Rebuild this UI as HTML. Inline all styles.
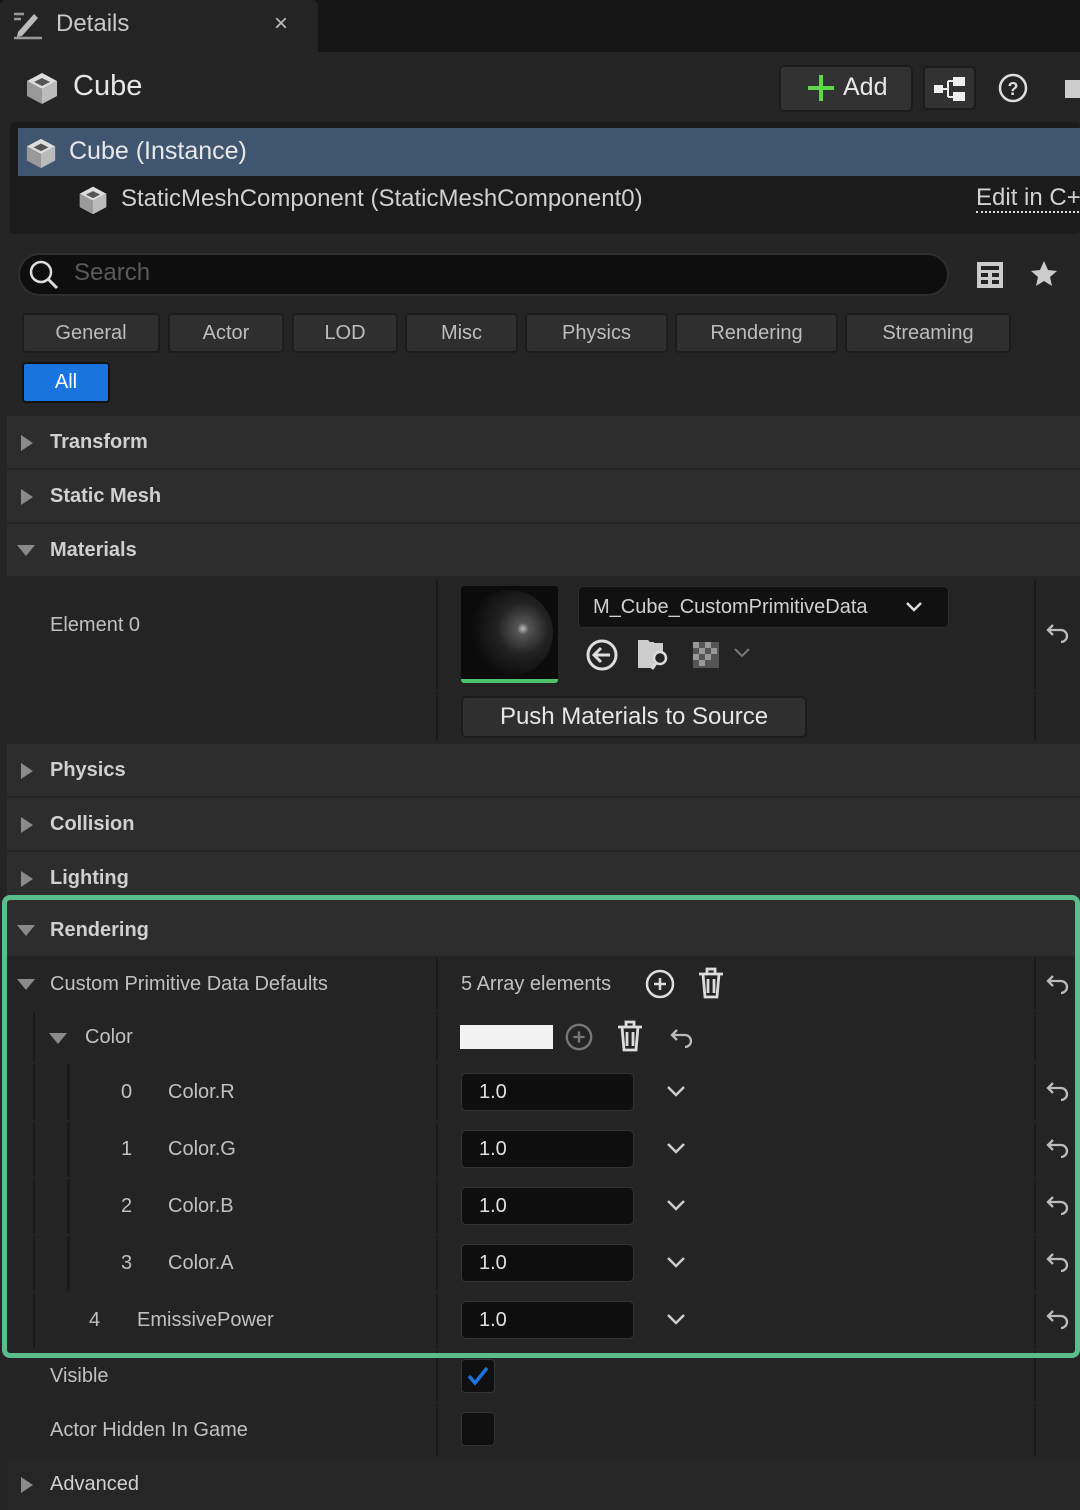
<!DOCTYPE html>
<html><head><meta charset="utf-8"><style>
*{margin:0;padding:0;box-sizing:border-box}
body{width:1080px;height:1510px;background:#151515;font-family:"Liberation Sans",sans-serif;color:#c8c8c8;position:relative;overflow:hidden}
.a{position:absolute}
.cat{position:absolute;left:7px;right:0;height:52px;background:#2d2d2d;font-weight:bold;font-size:20px;color:#d0d0d0;line-height:52px;padding-left:43px}
.row{position:absolute;left:7px;right:0;background:#242424;font-size:20px;color:#c0c0c0}
.tri{position:absolute;left:14px;top:19px;width:0;height:0;border-top:8px solid transparent;border-bottom:8px solid transparent;border-left:12px solid #8a8a8a}
.trd{position:absolute;left:10px;top:21px;width:0;height:0;border-left:9px solid transparent;border-right:9px solid transparent;border-top:11px solid #8a8a8a}
.btn{position:absolute;top:313px;height:40px;background:#2f2f2f;border:2px solid #1c1c1c;border-radius:4px;font-size:20px;color:#bdbdbd;text-align:center;line-height:36px}
.vsep{position:absolute;top:0;bottom:0;width:2px;background:#1a1a1a}
.num{position:absolute;left:461px;width:173px;height:38px;background:#0e0e0e;border-radius:5px;border:1px solid #333;color:#e0e0e0;font-size:20px;line-height:36px;padding-left:17px}
.chev{position:absolute;left:666px}
.rst{position:absolute;left:1045px}
</style></head><body>
<div class="a" style="left:0;top:0;width:318px;height:54px;background:#242424;border-radius:6px 6px 0 0"></div>
<svg class="a" style="left:12px;top:10px" width="34" height="30" viewBox="0 0 34 30"><path d="M6 22 L22 4 L26 8 L10 26 L5 27Z" fill="#bbb"/><path d="M2 4h10M2 9h7M2 28h28" stroke="#999" stroke-width="2.5"/></svg>
<div class="a" style="left:56px;top:10px;font-size:24px;color:#c8c8c8">Details</div>
<div class="a" style="left:274px;top:10px;font-size:24px;color:#bbb">×</div>
<div class="a" style="left:0;top:52px;width:1080px;height:1458px;background:#242424"></div>
<svg class="a" style="left:24px;top:70px" width="36" height="36" viewBox="0 0 36 36"><path d="M18 3L33 11L18 19L3 11Z" fill="#ddd"/><path d="M3 11L18 19V34L3 26Z" fill="#999"/><path d="M33 11L18 19V34L33 26Z" fill="#bbb"/><path d="M18 8L26 12L18 16L10 12Z" fill="#555"/></svg>
<div class="a" style="left:73px;top:70px;font-size:29px;color:#e6e6e6">Cube</div>
<div class="a" style="left:779px;top:65px;width:134px;height:47px;background:#323232;border:2px solid #1c1c1c;border-radius:5px"></div>
<div class="a" style="left:808px;top:86px;width:26px;height:4px;background:#5fd54a"></div>
<div class="a" style="left:819px;top:75px;width:4px;height:26px;background:#5fd54a"></div>
<div class="a" style="left:843px;top:73px;font-size:25px;color:#e8e8e8">Add</div>
<div class="a" style="left:923px;top:66px;width:53px;height:44px;background:#323232;border:2px solid #1c1c1c;border-radius:5px"></div>
<svg class="a" style="left:932px;top:75px" width="36" height="28" viewBox="0 0 36 28"><rect x="2" y="10" width="9" height="8" fill="#eee"/><rect x="21" y="2" width="12" height="9" fill="#eee"/><rect x="21" y="17" width="12" height="9" fill="#eee"/><path d="M11 14h5M16 6v16M16 6h5M16 22h5" stroke="#eee" stroke-width="2" fill="none"/></svg>
<svg class="a" style="left:997px;top:72px" width="32" height="32" viewBox="0 0 32 32"><circle cx="16" cy="16" r="13" stroke="#ddd" stroke-width="2.5" fill="none"/><text x="16" y="23" text-anchor="middle" font-size="18" font-weight="bold" fill="#ddd" font-family="Liberation Sans">?</text></svg>
<div class="a" style="left:1065px;top:80px;width:15px;height:18px;background:#ccc"></div>
<div class="a" style="left:10px;top:122px;width:1070px;height:112px;background:#1b1b1b;border-radius:4px"></div>
<div class="a" style="left:18px;top:128px;width:1062px;height:48px;background:#405670"></div>
<svg class="a" style="left:24px;top:136px" width="34" height="34" viewBox="0 0 36 36"><path d="M18 3L33 11L18 19L3 11Z" fill="#ddd"/><path d="M3 11L18 19V34L3 26Z" fill="#999"/><path d="M33 11L18 19V34L33 26Z" fill="#bbb"/><path d="M18 8L26 12L18 16L10 12Z" fill="#555"/></svg>
<div class="a" style="left:69px;top:137px;font-size:25px;color:#e8e8e8">Cube (Instance)</div>
<svg class="a" style="left:77px;top:184px" width="32" height="32" viewBox="0 0 36 36"><path d="M18 3L33 11L18 19L3 11Z" fill="#ddd"/><path d="M3 11L18 19V34L3 26Z" fill="#999"/><path d="M33 11L18 19V34L33 26Z" fill="#bbb"/><path d="M18 8L26 12L18 16L10 12Z" fill="#555"/></svg>
<div class="a" style="left:121px;top:185px;font-size:24px;color:#d0d0d0">StaticMeshComponent (StaticMeshComponent0)</div>
<div class="a" style="left:976px;top:185px;font-size:24px;color:#d0d0d0;white-space:nowrap;border-bottom:2px dotted #ddd;line-height:26px">Edit in C++</div>
<div class="a" style="left:18px;top:253px;width:931px;height:43px;background:#0e0e0e;border:2px solid #2e2e2e;border-radius:22px"></div>
<svg class="a" style="left:27px;top:258px" width="34" height="34" viewBox="0 0 34 34"><circle cx="14" cy="14" r="10" stroke="#ddd" stroke-width="2.5" fill="none"/><path d="M21 21L30 30" stroke="#ddd" stroke-width="3"/></svg>
<div class="a" style="left:74px;top:259px;font-size:24px;color:#5a5a5a">Search</div>
<svg class="a" style="left:974px;top:259px" width="32" height="32" viewBox="0 0 32 32"><rect x="3" y="3" width="26" height="26" fill="#ccc"/><rect x="7" y="7" width="18" height="4" fill="#242424"/><rect x="7" y="14" width="7" height="4" fill="#242424"/><rect x="18" y="14" width="7" height="4" fill="#242424"/><rect x="7" y="21" width="7" height="4" fill="#242424"/><rect x="18" y="21" width="7" height="4" fill="#242424"/></svg>
<svg class="a" style="left:1029px;top:259px" width="30" height="30" viewBox="0 0 30 30"><path d="M15 2L19 11L28 12L21 18L23 27L15 22L7 27L9 18L2 12L11 11Z" fill="#ccc"/></svg>
<div class="btn" style="left:22px;width:138px">General</div>
<div class="btn" style="left:168px;width:116px">Actor</div>
<div class="btn" style="left:292px;width:106px">LOD</div>
<div class="btn" style="left:405px;width:113px">Misc</div>
<div class="btn" style="left:525px;width:143px">Physics</div>
<div class="btn" style="left:675px;width:163px">Rendering</div>
<div class="btn" style="left:845px;width:166px">Streaming</div>
<div class="a" style="left:22px;top:362px;width:88px;height:41px;background:#1a74e0;border:2px solid #111;border-radius:4px;font-size:20px;color:#fff;text-align:center;line-height:37px">All</div>
<div class="cat" style="top:416px"><div class="tri"></div>Transform</div>
<div class="cat" style="top:470px"><div class="tri"></div>Static Mesh</div>
<div class="cat" style="top:524px"><div class="trd"></div>Materials</div>
<div class="row" style="top:578px;height:112px"><div class="vsep" style="left:429px"></div><div class="vsep" style="left:1027px"></div>
<div class="a" style="left:43px;top:36px">Element 0</div></div>
<div class="a" style="left:461px;top:586px;width:97px;height:97px;background:#0b0b0b;border-radius:3px;overflow:hidden"><div class="a" style="left:6px;top:4px;width:86px;height:86px;border-radius:50%;background:radial-gradient(circle at 65% 45%,#bbb 0,#555 8%,#222 35%,#0b0b0b 70%)"></div><div class="a" style="left:0;bottom:0;width:97px;height:4px;background:#4ac46a"></div></div>
<div class="a" style="left:578px;top:586px;width:371px;height:42px;background:#111;border:1px solid #2c2c2c;border-radius:5px;font-size:20px;color:#d0d0d0;line-height:40px;padding-left:14px">M_Cube_CustomPrimitiveData<svg style="position:absolute;left:326px;top:13px" width="18" height="14" viewBox="0 0 18 14"><path d="M2 3L9 10L16 3" stroke="#ddd" stroke-width="2.5" fill="none"/></svg></div>
<svg class="a" style="left:584px;top:637px" width="36" height="36" viewBox="0 0 36 36"><circle cx="18" cy="18" r="14" stroke="#ddd" stroke-width="3" fill="none"/><path d="M26 18H11M17 11L10 18L17 25" stroke="#ddd" stroke-width="3" fill="none"/></svg>
<svg class="a" style="left:636px;top:636px" width="36" height="36" viewBox="0 0 36 36"><rect x="2" y="6" width="16" height="26" fill="#ccc"/><path d="M2 4h10l3 3h12v14H2Z" fill="#ccc"/><circle cx="24" cy="22" r="6" stroke="#ddd" stroke-width="2.5" fill="#242424"/><path d="M20 27L16 33" stroke="#ddd" stroke-width="3"/></svg>
<svg class="a" style="left:692px;top:641px" width="30" height="28" viewBox="0 0 30 28"><rect x="1" y="1" width="26" height="26" fill="#555"/><rect x="1" y="1" width="6" height="6" fill="#999"/><rect x="13" y="1" width="6" height="6" fill="#999"/><rect x="7" y="7" width="6" height="6" fill="#999"/><rect x="19" y="7" width="6" height="6" fill="#999"/><rect x="1" y="13" width="6" height="6" fill="#999"/><rect x="13" y="13" width="6" height="6" fill="#999"/><rect x="7" y="19" width="6" height="6" fill="#999"/></svg>
<svg class="a" style="left:732px;top:646px" width="20" height="14" viewBox="0 0 20 14"><path d="M3 3L10 10L17 3" stroke="#777" stroke-width="2" fill="none"/></svg>
<svg class="a" style="left:1045px;top:620px" width="26" height="26" viewBox="0 0 26 26"><path d="M8 5L3 10L8 15M3 10H16a6 6 0 0 1 0 12" stroke="#bbb" stroke-width="2.3" fill="none"/></svg>
<div class="row" style="top:692px;height:50px"><div class="vsep" style="left:429px"></div><div class="vsep" style="left:1027px"></div></div>
<div class="a" style="left:461px;top:696px;width:346px;height:42px;background:#2f2f2f;border:2px solid #1b1b1b;border-radius:5px;font-size:24px;color:#e6e6e6;text-align:center;line-height:38px">Push Materials to Source</div>
<div class="cat" style="top:744px"><div class="tri"></div>Physics</div>
<div class="cat" style="top:798px"><div class="tri"></div>Collision</div>
<div class="cat" style="top:852px"><div class="tri"></div>Lighting</div>
<div class="cat" style="top:904px"><div class="trd"></div>Rendering</div>
<div class="row" style="top:958px;height:52px;line-height:52px"><div class="trd"></div><div class="vsep" style="left:429px"></div><div class="vsep" style="left:1027px"></div><span style="position:absolute;left:43px">Custom Primitive Data Defaults</span><span style="position:absolute;left:454px">5 Array elements</span></div>
<svg class="a" style="left:644px;top:968px" width="32" height="32" viewBox="0 0 32 32"><circle cx="16" cy="16" r="13" stroke="#ddd" stroke-width="2.5" fill="none"/><path d="M16 10v12M10 16h12" stroke="#ddd" stroke-width="2.5"/></svg>
<svg class="a" style="left:696px;top:966px" width="30" height="34" viewBox="0 0 30 34"><path d="M3 8h24M11 8V3h8v5M7 8l2 23h12l2-23M12 13v14M18 13v14" stroke="#ddd" stroke-width="2.8" fill="none"/></svg>
<svg class="a" style="left:1045px;top:971px" width="26" height="26" viewBox="0 0 26 26"><path d="M8 5L3 10L8 15M3 10H16a6 6 0 0 1 0 12" stroke="#bbb" stroke-width="2.3" fill="none"/></svg>
<div class="row" style="top:1012px;height:50px;line-height:50px"><div class="vsep" style="left:429px"></div><div class="vsep" style="left:1027px"></div><div class="a" style="left:26px;top:0;width:2px;height:50px;background:#1a1a1a"></div><div class="trd" style="left:42px"></div><span style="position:absolute;left:78px">Color</span></div>
<div class="a" style="left:460px;top:1025px;width:93px;height:24px;background:#f2f2f2"></div>
<svg class="a" style="left:564px;top:1022px" width="30" height="30" viewBox="0 0 32 32"><circle cx="16" cy="16" r="13" stroke="#777" stroke-width="2.5" fill="none"/><path d="M16 10v12M10 16h12" stroke="#777" stroke-width="2.5"/></svg>
<svg class="a" style="left:615px;top:1019px" width="30" height="34" viewBox="0 0 30 34"><path d="M3 8h24M11 8V3h8v5M7 8l2 23h12l2-23M12 13v14M18 13v14" stroke="#ddd" stroke-width="2.8" fill="none"/></svg>
<svg class="a" style="left:669px;top:1025px" width="26" height="26" viewBox="0 0 26 26"><path d="M8 5L3 10L8 15M3 10H16a6 6 0 0 1 0 12" stroke="#bbb" stroke-width="2.3" fill="none"/></svg>
<div class="row" style="top:1064px;height:56px;line-height:56px"><div class="vsep" style="left:429px"></div><div class="vsep" style="left:1027px"></div><div class="a" style="left:26px;width:2px;height:56px;background:#1a1a1a"></div><div class="a" style="left:60px;width:3px;height:56px;background:#1a1a1a"></div><span class="a" style="left:114px">0</span><span class="a" style="left:161px">Color.R</span></div>
<div class="row" style="top:1122px;height:55px;line-height:55px"><div class="vsep" style="left:429px"></div><div class="vsep" style="left:1027px"></div><div class="a" style="left:26px;width:2px;height:55px;background:#1a1a1a"></div><div class="a" style="left:60px;width:3px;height:55px;background:#1a1a1a"></div><span class="a" style="left:114px">1</span><span class="a" style="left:161px">Color.G</span></div>
<div class="row" style="top:1179px;height:55px;line-height:55px"><div class="vsep" style="left:429px"></div><div class="vsep" style="left:1027px"></div><div class="a" style="left:26px;width:2px;height:55px;background:#1a1a1a"></div><div class="a" style="left:60px;width:3px;height:55px;background:#1a1a1a"></div><span class="a" style="left:114px">2</span><span class="a" style="left:161px">Color.B</span></div>
<div class="row" style="top:1236px;height:55px;line-height:55px"><div class="vsep" style="left:429px"></div><div class="vsep" style="left:1027px"></div><div class="a" style="left:26px;width:2px;height:55px;background:#1a1a1a"></div><div class="a" style="left:60px;width:3px;height:55px;background:#1a1a1a"></div><span class="a" style="left:114px">3</span><span class="a" style="left:161px">Color.A</span></div>
<div class="row" style="top:1293px;height:55px;line-height:55px"><div class="vsep" style="left:429px"></div><div class="vsep" style="left:1027px"></div><div class="a" style="left:26px;width:2px;height:55px;background:#1a1a1a"></div><span class="a" style="left:82px">4</span><span class="a" style="left:130px">EmissivePower</span></div>
<div class="num" style="top:1073px">1.0</div>
<div class="num" style="top:1130px">1.0</div>
<div class="num" style="top:1187px">1.0</div>
<div class="num" style="top:1244px">1.0</div>
<div class="num" style="top:1301px">1.0</div>
<svg class="a chev" style="top:1083px" width="20" height="16" viewBox="0 0 20 16"><path d="M2 4L10 12L18 4" stroke="#ccc" stroke-width="2.5" fill="none"/></svg>
<svg class="a chev" style="top:1140px" width="20" height="16" viewBox="0 0 20 16"><path d="M2 4L10 12L18 4" stroke="#ccc" stroke-width="2.5" fill="none"/></svg>
<svg class="a chev" style="top:1197px" width="20" height="16" viewBox="0 0 20 16"><path d="M2 4L10 12L18 4" stroke="#ccc" stroke-width="2.5" fill="none"/></svg>
<svg class="a chev" style="top:1254px" width="20" height="16" viewBox="0 0 20 16"><path d="M2 4L10 12L18 4" stroke="#ccc" stroke-width="2.5" fill="none"/></svg>
<svg class="a chev" style="top:1311px" width="20" height="16" viewBox="0 0 20 16"><path d="M2 4L10 12L18 4" stroke="#ccc" stroke-width="2.5" fill="none"/></svg>
<svg class="a rst" style="top:1078px" width="26" height="26" viewBox="0 0 26 26"><path d="M8 5L3 10L8 15M3 10H16a6 6 0 0 1 0 12" stroke="#bbb" stroke-width="2.3" fill="none"/></svg>
<svg class="a rst" style="top:1135px" width="26" height="26" viewBox="0 0 26 26"><path d="M8 5L3 10L8 15M3 10H16a6 6 0 0 1 0 12" stroke="#bbb" stroke-width="2.3" fill="none"/></svg>
<svg class="a rst" style="top:1192px" width="26" height="26" viewBox="0 0 26 26"><path d="M8 5L3 10L8 15M3 10H16a6 6 0 0 1 0 12" stroke="#bbb" stroke-width="2.3" fill="none"/></svg>
<svg class="a rst" style="top:1249px" width="26" height="26" viewBox="0 0 26 26"><path d="M8 5L3 10L8 15M3 10H16a6 6 0 0 1 0 12" stroke="#bbb" stroke-width="2.3" fill="none"/></svg>
<svg class="a rst" style="top:1306px" width="26" height="26" viewBox="0 0 26 26"><path d="M8 5L3 10L8 15M3 10H16a6 6 0 0 1 0 12" stroke="#bbb" stroke-width="2.3" fill="none"/></svg>
<div class="row" style="top:1350px;height:52px;line-height:52px"><div class="vsep" style="left:429px"></div><div class="vsep" style="left:1027px"></div><span class="a" style="left:43px">Visible</span></div>
<div class="a" style="left:461px;top:1359px;width:34px;height:34px;background:#0f0f0f;border:1px solid #333;border-radius:4px"></div>
<svg class="a" style="left:465px;top:1364px" width="26" height="24" viewBox="0 0 26 24"><path d="M4 12L10 19L22 4" stroke="#1a74e0" stroke-width="3.5" fill="none"/></svg>
<div class="row" style="top:1404px;height:52px;line-height:52px"><div class="vsep" style="left:429px"></div><div class="vsep" style="left:1027px"></div><span class="a" style="left:43px">Actor Hidden In Game</span></div>
<div class="a" style="left:461px;top:1412px;width:34px;height:34px;background:#0f0f0f;border:1px solid #333;border-radius:4px"></div>
<div class="cat" style="top:1458px;font-weight:normal;background:#262626"><div class="tri"></div>Advanced</div>
<div class="a" style="left:2px;top:895px;width:1078px;height:463px;border:5px solid #5bbd8b;border-radius:8px"></div>
</body></html>
